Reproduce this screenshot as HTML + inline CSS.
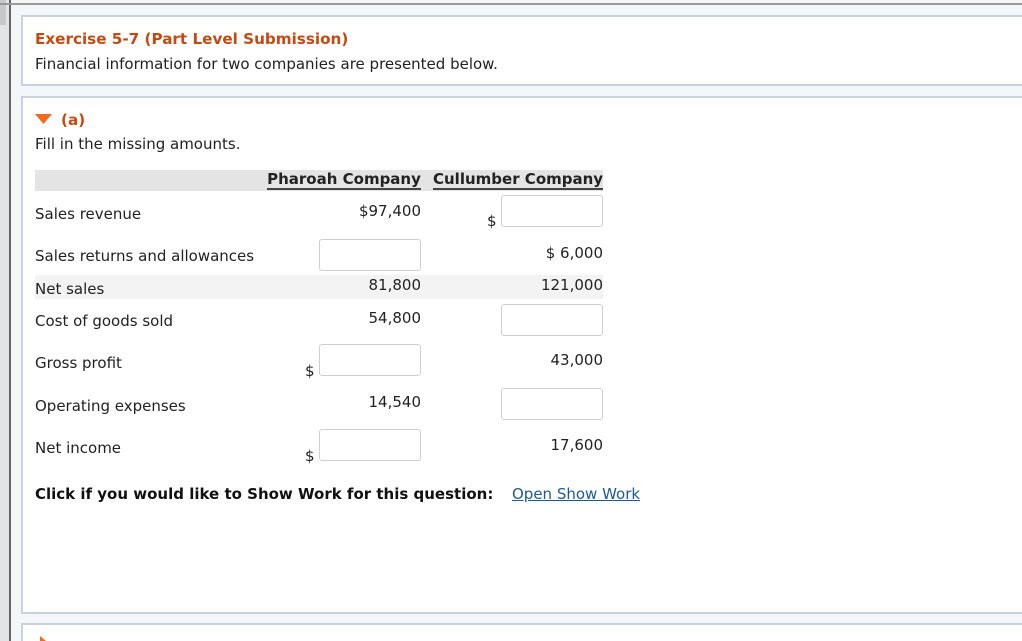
<!DOCTYPE html>
<html><head><meta charset="utf-8"><style>
*{margin:0;padding:0;box-sizing:border-box}
html,body{width:1022px;height:641px;overflow:hidden}
body{background:#f4f7fa;font-family:"DejaVu Sans",Verdana,sans-serif;font-size:15px;color:#222;position:relative}
.a{position:absolute;line-height:18px;white-space:nowrap}
.r{text-align:right}
.box{position:absolute;left:21px;width:1010px;background:#fff;border:2px solid #c9d2de}
.in{position:absolute;width:102px;height:32px;border:1px solid #cfcfcf;border-radius:3px;background:#fff}
.b{font-weight:bold}
</style></head><body>
<div style="position:absolute;left:0;top:0;width:9px;height:641px;background:#e4e4e4"></div>
<div style="position:absolute;left:0;top:0;width:6px;height:25px;background:#c8c8c8"></div>
<div style="position:absolute;left:9px;top:0;width:2px;height:641px;background:#666"></div>
<div style="position:absolute;left:0;top:3px;width:1022px;height:2px;background:#9a9a9a"></div>

<div class="box" style="top:15px;height:71px"></div>
<div class="a b" style="left:35px;top:30px;color:#c64a10;font-size:15.2px">Exercise 5-7 (Part Level Submission)</div>
<div class="a" style="left:35px;top:55px">Financial information for two companies are presented below.</div>

<div class="box" style="top:96px;height:518px"></div>
<svg style="position:absolute;left:35px;top:114px" width="18" height="11"><polygon points="0,0 17,0 8.5,10" fill="#f26a1b"/></svg>
<div class="a b" style="left:61px;top:111px;color:#c64a10;font-size:15.2px">(a)</div>
<div class="a" style="left:35px;top:135px">Fill in the missing amounts.</div>

<div style="position:absolute;left:35px;top:170px;width:568px;height:21px;background:#e4e4e4"></div>
<div class="a b" style="left:267px;top:171px;width:154px;border-bottom:2px solid #444;font-size:15px;text-align:center;line-height:17px">Pharoah Company</div>
<div class="a b" style="left:433px;top:171px;width:170px;border-bottom:2px solid #444;font-size:15px;text-align:center;line-height:17px">Cullumber Company</div>

<div class="a" style="left:35px;top:205px">Sales revenue</div>
<div class="a r" style="left:301px;top:202px;width:120px">$97,400</div>
<div class="a" style="left:487px;top:212px">$</div><div class="in" style="left:501px;top:195px"></div>

<div class="a" style="left:35px;top:247px">Sales returns and allowances</div>
<div class="in" style="left:319px;top:239px"></div>
<div class="a r" style="left:483px;top:244px;width:120px">$ 6,000</div>

<div style="position:absolute;left:35px;top:275px;width:568px;height:24px;background:#f3f3f3"></div>
<div class="a" style="left:35px;top:280px">Net sales</div>
<div class="a r" style="left:301px;top:276px;width:120px">81,800</div>
<div class="a r" style="left:483px;top:276px;width:120px">121,000</div>

<div class="a" style="left:35px;top:312px">Cost of goods sold</div>
<div class="a r" style="left:301px;top:309px;width:120px">54,800</div>
<div class="in" style="left:501px;top:304px"></div>

<div class="a" style="left:35px;top:354px">Gross profit</div>
<div class="a" style="left:305px;top:362px">$</div><div class="in" style="left:319px;top:344px"></div>
<div class="a r" style="left:483px;top:351px;width:120px">43,000</div>

<div class="a" style="left:35px;top:397px">Operating expenses</div>
<div class="a r" style="left:301px;top:393px;width:120px">14,540</div>
<div class="in" style="left:501px;top:388px"></div>

<div class="a" style="left:35px;top:439px">Net income</div>
<div class="a" style="left:305px;top:447px">$</div><div class="in" style="left:319px;top:429px"></div>
<div class="a r" style="left:483px;top:436px;width:120px">17,600</div>

<div class="a b" style="left:35px;top:485px;font-size:15px;color:#111">Click if you would like to Show Work for this question:</div>
<div class="a" style="left:512px;top:485px;color:#1a5a96;text-decoration:underline">Open Show Work</div>

<div class="box" style="top:623px;height:40px"></div>
<svg style="position:absolute;left:40px;top:636px" width="8" height="5"><polygon points="0,0 6,5 0,5" fill="#f26a1b"/></svg>
</body></html>
